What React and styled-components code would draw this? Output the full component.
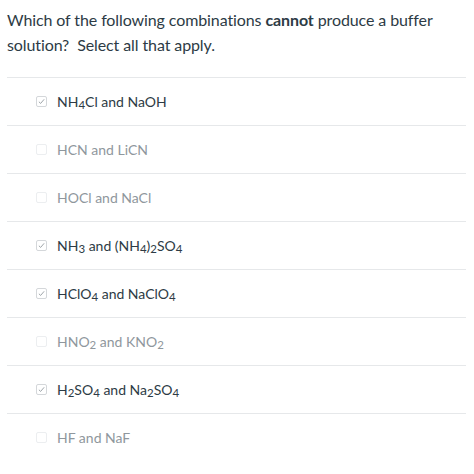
import React from "react";
import styled, { createGlobalStyle } from "styled-components";

const Global = createGlobalStyle`
  html, body { margin: 0; padding: 0; background: #fff; }
  body { font-family: Lato, "Open Sans", sans-serif; color: #2d3b45; }
`;

const Page = styled.div`
  padding: 7px 8px 0 7px;
  width: 474px;
  box-sizing: border-box;
`;

const Question = styled.p`
  margin: 0;
  font-size: 16px;
  line-height: 25px;
  letter-spacing: -0.1px;
  color: #2d3b45;
  height: 70px;
`;

const Strong = styled.strong`
  font-weight: 700;
`;

const List = styled.div`
  border-top: 1px solid #e6e8ea;
`;

const Row = styled.div`
  height: 47px;
  border-bottom: 1px solid #e6e8ea;
  display: flex;
  align-items: center;
  padding-left: 29px;
  gap: 10px;
  &:last-child { border-bottom: none; }
`;

const Box = styled.span`
  width: 9px;
  height: 9px;
  border: 1px solid ${(p) => (p.$checked ? "#d4d7da" : "#eceef0")};
  border-radius: 2px;
  background: #fff;
  display: flex;
  align-items: center;
  justify-content: center;
  flex: none;
`;

const Label = styled.span`
  font-size: 14px;
  color: ${(p) => (p.$checked ? "#2d3b45" : "#8f979d")};
  line-height: 18px;
`;

const Sub = styled.sub`
  font-size: 82%;
  vertical-align: -0.2em;
  line-height: 0;
`;

const Check = () => (
  <svg width="7" height="7" viewBox="0 0 8 8">
    <path d="M1 4.3 L3 6.2 L7 1.5" fill="none" stroke="#9aa1a6" strokeWidth="1.1" />
  </svg>
);

const options = [
  [true, <>NH<Sub>4</Sub>Cl and NaOH</>],
  [false, <>HCN and LiCN</>],
  [false, <>HOCl and NaCl</>],
  [true, <>NH<Sub>3</Sub> and (NH<Sub>4</Sub>)<Sub>2</Sub>SO<Sub>4</Sub></>],
  [true, <>HClO<Sub>4</Sub> and NaClO<Sub>4</Sub></>],
  [false, <>HNO<Sub>2</Sub> and KNO<Sub>2</Sub></>],
  [true, <>H<Sub>2</Sub>SO<Sub>4</Sub> and Na<Sub>2</Sub>SO<Sub>4</Sub></>],
  [false, <>HF and NaF</>],
];

export default function App() {
  return (
    <>
      <Global />
      <Page>
        <Question>
          Which of the following combinations <Strong>cannot</Strong> produce a buffer
          solution?&nbsp; Select all that apply.
        </Question>
        <List>
          {options.map(([checked, label], i) => (
            <Row key={i}>
              <Box $checked={checked}>{checked && <Check />}</Box>
              <Label $checked={checked}>{label}</Label>
            </Row>
          ))}
        </List>
      </Page>
    </>
  );
}
